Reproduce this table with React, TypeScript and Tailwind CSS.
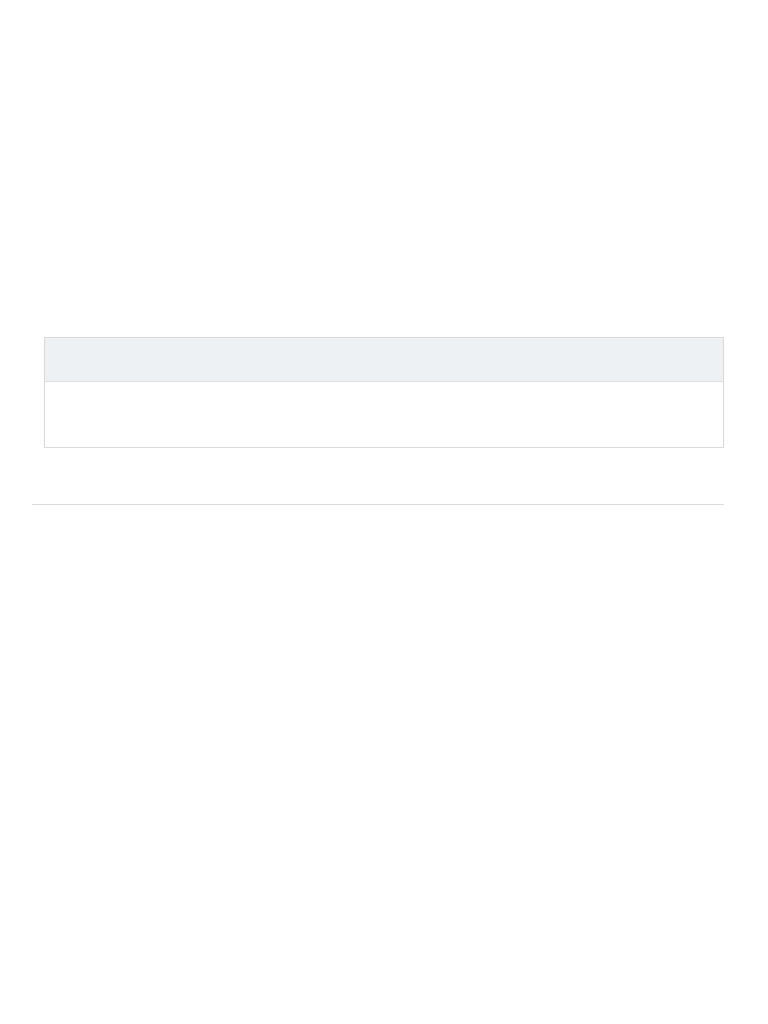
export default function App() {
  return (
    <div className="min-h-screen bg-white" style={{ fontFamily: '"Liberation Sans", Arial, sans-serif' }}>
      <main className="pt-[337px] pl-8 pr-[44px]">
        {/* Empty table */}
        <div className="ml-3 border border-[#d9d9d9]">
          <div className="h-[44px] bg-[#eef1f4] border-b border-[#dcdfe3]" />
          <div className="h-[65px] bg-white" />
        </div>

        <hr className="mt-[56px] border-0 border-t border-[#dadada]" />
      </main>
    </div>
  );
}
